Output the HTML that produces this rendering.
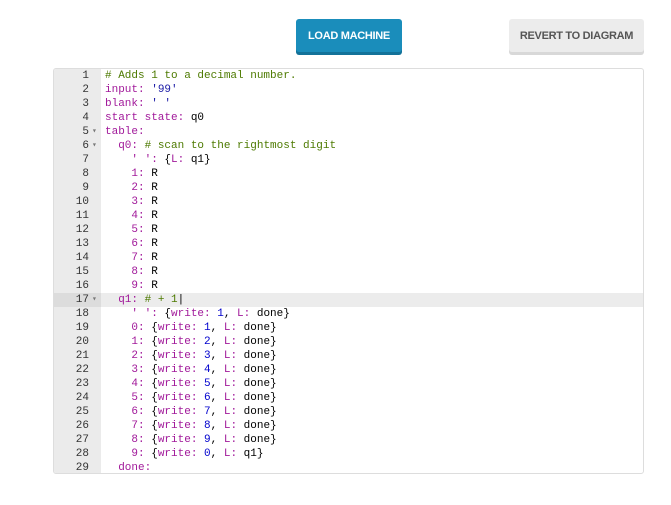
<!DOCTYPE html>
<html><head><style>
body{margin:0;width:671px;height:505px;background:#fff;font-family:"Liberation Sans",sans-serif;position:relative;overflow:hidden}
.btn{position:absolute;top:19px;height:33px;border-radius:3px;font-weight:bold;font-size:11px;display:flex;align-items:center;justify-content:center;letter-spacing:-0.3px}
.b1{left:296px;width:106px;background:#1a8dbb;color:#fff;box-shadow:0 3px 0 #137299}
.b2{left:509px;width:135px;background:#ececec;color:#555;box-shadow:0 3px 0 #d8d8d8}
.ed{position:absolute;left:53px;top:68px;width:589px;height:404px;border:1px solid #ddd;border-radius:3px;overflow:hidden;font-family:"Liberation Mono",monospace;font-size:11px}
.g{position:absolute;left:0;top:0;width:47px;height:100%;background:#ebebeb}
.l{position:absolute;left:0;width:589px;height:14px;line-height:14px;white-space:pre}
.n{position:absolute;left:0;width:35px;text-align:right;color:#333}
.c{position:absolute;left:51px;color:#000}
.f{position:absolute;left:38px;color:#777;font-size:8px}
.act{background:#ececec}
.act .n{background:#dcdcdc;width:47px;padding-right:12px;box-sizing:border-box}
.k{color:#a1199a}.cm{color:#4d7a00}.s{color:#1a1aa6}.m{color:#0000cd}
</style></head><body>
<div class="btn b1">LOAD MACHINE</div>
<div class="btn b2">REVERT TO DIAGRAM</div>
<div class="ed"><div class="g"></div>
<div class="l" style="top:0px"><span class="n">1</span><span class="c"><span class="cm"># Adds 1 to a decimal number.</span></span></div>
<div class="l" style="top:14px"><span class="n">2</span><span class="c"><span class="k">input:</span> <span class="s">'99'</span></span></div>
<div class="l" style="top:28px"><span class="n">3</span><span class="c"><span class="k">blank:</span> <span class="s">' '</span></span></div>
<div class="l" style="top:42px"><span class="n">4</span><span class="c"><span class="k">start state:</span> q0</span></div>
<div class="l" style="top:56px"><span class="n">5</span><span class="f">▾</span><span class="c"><span class="k">table:</span></span></div>
<div class="l" style="top:70px"><span class="n">6</span><span class="f">▾</span><span class="c">  <span class="k">q0:</span> <span class="cm"># scan to the rightmost digit</span></span></div>
<div class="l" style="top:84px"><span class="n">7</span><span class="c">    <span class="k">' ':</span> {<span class="k">L:</span> q1}</span></div>
<div class="l" style="top:98px"><span class="n">8</span><span class="c">    <span class="k">1:</span> R</span></div>
<div class="l" style="top:112px"><span class="n">9</span><span class="c">    <span class="k">2:</span> R</span></div>
<div class="l" style="top:126px"><span class="n">10</span><span class="c">    <span class="k">3:</span> R</span></div>
<div class="l" style="top:140px"><span class="n">11</span><span class="c">    <span class="k">4:</span> R</span></div>
<div class="l" style="top:154px"><span class="n">12</span><span class="c">    <span class="k">5:</span> R</span></div>
<div class="l" style="top:168px"><span class="n">13</span><span class="c">    <span class="k">6:</span> R</span></div>
<div class="l" style="top:182px"><span class="n">14</span><span class="c">    <span class="k">7:</span> R</span></div>
<div class="l" style="top:196px"><span class="n">15</span><span class="c">    <span class="k">8:</span> R</span></div>
<div class="l" style="top:210px"><span class="n">16</span><span class="c">    <span class="k">9:</span> R</span></div>
<div class="l act" style="top:224px"><span class="n">17</span><span class="f">▾</span><span class="c">  <span class="k">q1:</span> <span class="cm"># + 1</span>|</span></div>
<div class="l" style="top:238px"><span class="n">18</span><span class="c">    <span class="k">' ':</span> {<span class="k">write:</span> <span class="m">1</span>, <span class="k">L:</span> done}</span></div>
<div class="l" style="top:252px"><span class="n">19</span><span class="c">    <span class="k">0:</span> {<span class="k">write:</span> <span class="m">1</span>, <span class="k">L:</span> done}</span></div>
<div class="l" style="top:266px"><span class="n">20</span><span class="c">    <span class="k">1:</span> {<span class="k">write:</span> <span class="m">2</span>, <span class="k">L:</span> done}</span></div>
<div class="l" style="top:280px"><span class="n">21</span><span class="c">    <span class="k">2:</span> {<span class="k">write:</span> <span class="m">3</span>, <span class="k">L:</span> done}</span></div>
<div class="l" style="top:294px"><span class="n">22</span><span class="c">    <span class="k">3:</span> {<span class="k">write:</span> <span class="m">4</span>, <span class="k">L:</span> done}</span></div>
<div class="l" style="top:308px"><span class="n">23</span><span class="c">    <span class="k">4:</span> {<span class="k">write:</span> <span class="m">5</span>, <span class="k">L:</span> done}</span></div>
<div class="l" style="top:322px"><span class="n">24</span><span class="c">    <span class="k">5:</span> {<span class="k">write:</span> <span class="m">6</span>, <span class="k">L:</span> done}</span></div>
<div class="l" style="top:336px"><span class="n">25</span><span class="c">    <span class="k">6:</span> {<span class="k">write:</span> <span class="m">7</span>, <span class="k">L:</span> done}</span></div>
<div class="l" style="top:350px"><span class="n">26</span><span class="c">    <span class="k">7:</span> {<span class="k">write:</span> <span class="m">8</span>, <span class="k">L:</span> done}</span></div>
<div class="l" style="top:364px"><span class="n">27</span><span class="c">    <span class="k">8:</span> {<span class="k">write:</span> <span class="m">9</span>, <span class="k">L:</span> done}</span></div>
<div class="l" style="top:378px"><span class="n">28</span><span class="c">    <span class="k">9:</span> {<span class="k">write:</span> <span class="m">0</span>, <span class="k">L:</span> q1}</span></div>
<div class="l" style="top:392px"><span class="n">29</span><span class="c">  <span class="k">done:</span></span></div>
</div>
</body></html>
